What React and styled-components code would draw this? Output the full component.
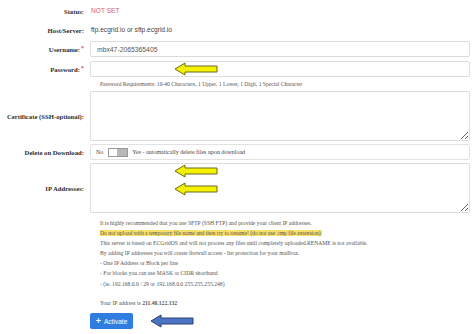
import React from "react";
import styled, { createGlobalStyle } from "styled-components";

const GlobalStyle = createGlobalStyle`
  body {
    margin: 0;
    background: #fff;
  }
  * {
    box-sizing: border-box;
  }
`;

const Page = styled.div`
  width: 474px;
  padding: 5px 4px 0 0;
  display: flex;
  flex-direction: column;
`;

const Row = styled.div`
  display: grid;
  grid-template-columns: 84px 1fr;
  column-gap: 6px;
  align-items: center;
  margin-top: ${(p) => p.$mt || 0}px;
`;

const Label = styled.label`
  text-align: right;
  font-family: "Liberation Serif", serif;
  font-weight: bold;
  font-size: 6.7px;
  color: #2e2e2e;
  white-space: nowrap;
`;

const Req = styled.span`
  color: #e05566;
  font-size: 6px;
  position: relative;
  top: -2px;
  margin-left: 1px;
`;

const Value = styled.div`
  font-family: "Liberation Sans", sans-serif;
  font-size: 6.6px;
  color: ${(p) => p.$color || "#444"};
  height: 12px;
  line-height: 12px;
  padding-left: 1px;
`;

const Field = styled.div`
  position: relative;
`;

const Input = styled.input`
  display: block;
  width: 100%;
  height: 16px;
  border: 1px solid #dcdcdc;
  border-radius: 2px;
  padding: 0 6px;
  font-family: "Liberation Sans", sans-serif;
  font-size: 6.8px;
  color: #555;
  outline: none;
`;

const TextArea = styled.textarea`
  display: block;
  width: 100%;
  height: 50px;
  border: 1px solid #dcdcdc;
  border-radius: 2px;
  outline: none;
  font-size: 7px;
`;

const Help = styled.div`
  padding-left: 10px;
  font-family: "Liberation Serif", serif;
  font-size: 5.6px;
  color: #555;
  line-height: ${(p) => p.$lh || 8}px;
`;

const ToggleBox = styled.div`
  height: 16px;
  border: 1px solid #e2e2e2;
  border-radius: 2px;
  display: flex;
  align-items: center;
  padding: 0 4px 0 5px;
  font-family: "Liberation Serif", serif;
  font-size: 6px;
  color: #444;
`;

const Switch = styled.span`
  display: inline-block;
  width: 20px;
  height: 9px;
  margin: 0 4px 0 5px;
  border: 1px solid #999;
  background: linear-gradient(to right, #fff 45%, #b8b8b8 45%);
`;

const Info = styled.div`
  padding-left: 10px;
  margin-top: 3px;
  font-family: "Liberation Serif", serif;
  font-size: 5.65px;
  color: #555;
  display: flex;
  flex-direction: column;
`;

const Line = styled.div`
  line-height: ${(p) => p.$lh || 10}px;
  margin-top: ${(p) => p.$mt || 0}px;
`;

const Mark = styled.span`
  background: #f8e06a;
  padding: 0 1px 0 0;
`;

const ButtonRow = styled.div`
  position: relative;
  margin: 5px 0 0 90px;
  height: 16px;
`;

const Button = styled.button`
  height: 16px;
  width: 43px;
  border: none;
  border-radius: 2px;
  background: #2f7de1;
  color: #fff;
  font-family: "Liberation Sans", sans-serif;
  font-size: 6.6px;
  display: flex;
  align-items: center;
  justify-content: center;
  gap: 3px;
  padding: 0;
`;

const Plus = styled.span`
  font-weight: bold;
  font-size: 9px;
  line-height: 9px;
`;

const ArrowWrap = styled.span`
  position: absolute;
  left: ${(p) => p.$left}px;
  top: ${(p) => p.$top}px;
  line-height: 0;
`;

const Arrow = ({ left, top, fill, stroke, h = 14 }) => (
  <ArrowWrap $left={left} $top={top}>
    <svg width="44" height={h} viewBox="0 0 44 14">
      <polygon
        points="1,7 11,1 11,4 43,4 43,10 11,10 11,13"
        fill={fill}
        stroke={stroke}
        strokeWidth="1"
        strokeLinejoin="round"
      />
    </svg>
  </ArrowWrap>
);

export default function App() {
  return (
    <>
      <GlobalStyle />
      <Page>
        <Row>
          <Label>Status:</Label>
          <Value $color="#e05a6c">NOT SET</Value>
        </Row>
        <Row $mt={7}>
          <Label>Host/Server:</Label>
          <Value>ftp.ecgrid.io or sftp.ecgrid.io</Value>
        </Row>
        <Row $mt={5}>
          <Label>
            Username:<Req>*</Req>
          </Label>
          <Field>
            <Input defaultValue="mbx47-2065365405" />
          </Field>
        </Row>
        <Row $mt={4}>
          <Label>
            Password:<Req>*</Req>
          </Label>
          <Field>
            <Input type="password" />
            <Arrow left={84} top={1} fill="#f4f200" stroke="#6b6b1a" />
          </Field>
        </Row>
        <Row $mt={2}>
          <span />
          <Help $lh={10}>
            Password Requirements: 10-40 Characters, 1 Upper, 1 Lower, 1 Digit, 1 Special Character
          </Help>
        </Row>
        <Row $mt={2}>
          <Label>Certificate (SSH-optional):</Label>
          <Field>
            <TextArea />
          </Field>
        </Row>
        <Row $mt={3}>
          <Label>Delete on Download:</Label>
          <ToggleBox>
            No<Switch />Yes - automatically delete files upon download
          </ToggleBox>
        </Row>
        <Row $mt={3}>
          <Label>IP Addresses:</Label>
          <Field>
            <TextArea />
            <Arrow left={84} top={1} fill="#f4f200" stroke="#6b6b1a" />
            <Arrow left={84} top={19} fill="#f4f200" stroke="#6b6b1a" />
          </Field>
        </Row>
        <Row>
          <span />
          <Info>
            <Line $mt={2}>
              It is highly recommended that you use SFTP (SSH FTP) and provide your client IP addresses.
            </Line>
            <Line>
              <Mark>
                Do not upload with a temporary file name and then try to rename! (do not use .tmp file extension)
              </Mark>
            </Line>
            <Line>
              This server is based on ECGridOS and will not process any files until completely uploaded.RENAME is not available.
            </Line>
            <Line>By adding IP addresses you will create firewall access - list protection for your mailbox.</Line>
            <Line>- One IP Address or Block per line</Line>
            <Line $lh={11}>- For blocks you can use MASK or CIDR shorthand</Line>
            <Line>- (ie. 192.168.0.0 / 29 or 192.168.0.0 255.255.255.248)</Line>
            <Line $mt={9}>
              Your IP address is <b>211.40.122.132</b>
            </Line>
          </Info>
        </Row>
        <ButtonRow>
          <Button>
            <Plus>+</Plus>Activate
          </Button>
          <Arrow left={60} top={0} h={16} fill="#4a74c4" stroke="#2c3f73" />
        </ButtonRow>
      </Page>
    </>
  );
}
